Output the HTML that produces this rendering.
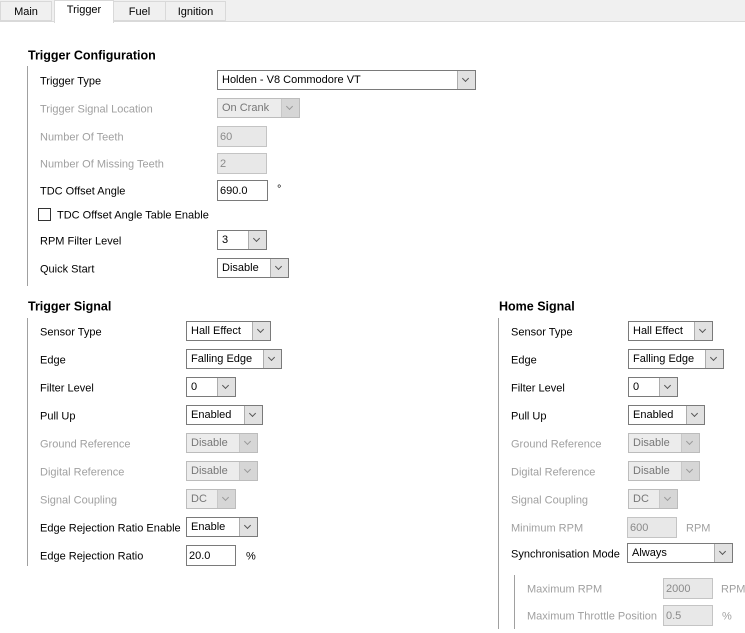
<!DOCTYPE html><html><head><style>
body{margin:0;width:745px;height:633px;background:#fff;font-family:"Liberation Sans",sans-serif;font-size:11px;color:#000;position:relative;overflow:hidden}
.a{position:absolute;white-space:nowrap}
.l{position:absolute;white-space:nowrap;transform:translateY(-45%)}
.d{color:#a0a0a0}
.h{font-weight:bold;font-size:12.5px}
.c{position:absolute;height:20px;border:1px solid #7a7a7a;background:#fff;box-sizing:border-box;padding:3px 0 0 4px}
.c.x{background:#ececec;border-color:#bcbcbc;color:#777}
.c .b{position:absolute;right:0;top:0;width:17px;height:18px;background:#e1e1e1;border-left:1px solid #adadad}
.c.x .b{background:#d6d6d6;border-left:1px solid #c8c8c8}
.c .b:after{content:"";position:absolute;left:5px;top:5px;width:4px;height:4px;border-right:1px solid #555;border-bottom:1px solid #555;transform:rotate(45deg)}
.c.x .b:after{border-color:#999}
.i{position:absolute;height:21px;border:1px solid #7a7a7a;background:#fff;box-sizing:border-box;padding:4px 0 0 2px;width:50px}
.i.x{background:#e8e8e8;border-color:#c4c4c4;color:#8a8a8a}
.v{position:absolute;width:1px;background:#a0a0a0}
.tab{position:absolute;top:1px;height:20px;background:#f0f0f0;border:1px solid #d9d9d9;box-sizing:border-box;text-align:center;padding-top:4px}
</style></head><body>
<div class="a" style="left:0;top:0;width:745px;height:21px;background:#f0f0f0;border-bottom:1px solid #d9d9d9"></div>
<div class="tab" style="left:0;width:52px">Main</div>
<div class="tab" style="left:113px;width:53px">Fuel</div>
<div class="tab" style="left:165px;width:61px">Ignition</div>
<div class="tab" style="left:54px;top:0;width:60px;height:23px;background:#fff;border-bottom:none;padding-top:3px">Trigger</div>

<div class="l h" style="left:28px;top:55px">Trigger Configuration</div>
<div class="v" style="left:27px;top:66px;height:220px"></div>
<div class="l" style="left:40px;top:81px">Trigger Type</div>
<div class="c" style="left:217px;top:70px;width:259px">Holden - V8 Commodore VT<div class="b"></div></div>
<div class="l d" style="left:40px;top:109px">Trigger Signal Location</div>
<div class="c x" style="left:217px;top:98px;width:83px">On Crank<div class="b"></div></div>
<div class="l d" style="left:40px;top:137px">Number Of Teeth</div>
<div class="i x" style="left:217px;top:126px">60</div>
<div class="l d" style="left:40px;top:164px">Number Of Missing Teeth</div>
<div class="i x" style="left:217px;top:153px">2</div>
<div class="l" style="left:40px;top:191px">TDC Offset Angle</div>
<div class="i" style="left:217px;top:180px;width:51px">690.0</div>
<div class="l" style="left:277px;top:189px">°</div>
<div class="a" style="left:38px;top:208px;width:13px;height:13px;border:1px solid #333;box-sizing:border-box"></div>
<div class="l" style="left:57px;top:215px">TDC Offset Angle Table Enable</div>
<div class="l" style="left:40px;top:241px">RPM Filter Level</div>
<div class="c" style="left:217px;top:230px;width:50px">3<div class="b"></div></div>
<div class="l" style="left:40px;top:269px">Quick Start</div>
<div class="c" style="left:217px;top:258px;width:72px">Disable<div class="b"></div></div>

<div class="l h" style="left:28px;top:306px">Trigger Signal</div>
<div class="v" style="left:27px;top:318px;height:248px"></div>
<div class="l" style="left:40px;top:332px">Sensor Type</div><div class="c" style="left:186px;top:321px;width:85px">Hall Effect<div class="b"></div></div>
<div class="l" style="left:40px;top:360px">Edge</div><div class="c" style="left:186px;top:349px;width:96px">Falling Edge<div class="b"></div></div>
<div class="l" style="left:40px;top:388px">Filter Level</div><div class="c" style="left:186px;top:377px;width:50px">0<div class="b"></div></div>
<div class="l" style="left:40px;top:416px">Pull Up</div><div class="c" style="left:186px;top:405px;width:77px">Enabled<div class="b"></div></div>
<div class="l d" style="left:40px;top:444px">Ground Reference</div><div class="c x" style="left:186px;top:433px;width:72px">Disable<div class="b"></div></div>
<div class="l d" style="left:40px;top:472px">Digital Reference</div><div class="c x" style="left:186px;top:461px;width:72px">Disable<div class="b"></div></div>
<div class="l d" style="left:40px;top:500px">Signal Coupling</div><div class="c x" style="left:186px;top:489px;width:50px">DC<div class="b"></div></div>
<div class="l" style="left:40px;top:528px">Edge Rejection Ratio Enable</div><div class="c" style="left:186px;top:517px;width:72px">Enable<div class="b"></div></div>
<div class="l" style="left:40px;top:556px">Edge Rejection Ratio</div><div class="i" style="left:186px;top:545px">20.0</div><div class="l" style="left:246px;top:556px">%</div>

<div class="l h" style="left:499px;top:306px">Home Signal</div>
<div class="v" style="left:498px;top:318px;height:311px"></div>
<div class="l" style="left:511px;top:332px">Sensor Type</div><div class="c" style="left:628px;top:321px;width:85px">Hall Effect<div class="b"></div></div>
<div class="l" style="left:511px;top:360px">Edge</div><div class="c" style="left:628px;top:349px;width:96px">Falling Edge<div class="b"></div></div>
<div class="l" style="left:511px;top:388px">Filter Level</div><div class="c" style="left:628px;top:377px;width:50px">0<div class="b"></div></div>
<div class="l" style="left:511px;top:416px">Pull Up</div><div class="c" style="left:628px;top:405px;width:77px">Enabled<div class="b"></div></div>
<div class="l d" style="left:511px;top:444px">Ground Reference</div><div class="c x" style="left:628px;top:433px;width:72px">Disable<div class="b"></div></div>
<div class="l d" style="left:511px;top:472px">Digital Reference</div><div class="c x" style="left:628px;top:461px;width:72px">Disable<div class="b"></div></div>
<div class="l d" style="left:511px;top:500px">Signal Coupling</div><div class="c x" style="left:628px;top:489px;width:50px">DC<div class="b"></div></div>
<div class="l d" style="left:511px;top:528px">Minimum RPM</div><div class="i x" style="left:627px;top:517px">600</div><div class="l d" style="left:686px;top:528px">RPM</div>
<div class="l" style="left:511px;top:554px">Synchronisation Mode</div><div class="c" style="left:627px;top:543px;width:106px">Always<div class="b"></div></div>
<div class="v" style="left:514px;top:575px;height:54px"></div>
<div class="l d" style="left:527px;top:589px">Maximum RPM</div><div class="i x" style="left:663px;top:578px">2000</div><div class="l d" style="left:721px;top:589px">RPM</div>
<div class="l d" style="left:527px;top:616px">Maximum Throttle Position</div><div class="i x" style="left:663px;top:605px">0.5</div><div class="l d" style="left:722px;top:616px">%</div>
</body></html>
